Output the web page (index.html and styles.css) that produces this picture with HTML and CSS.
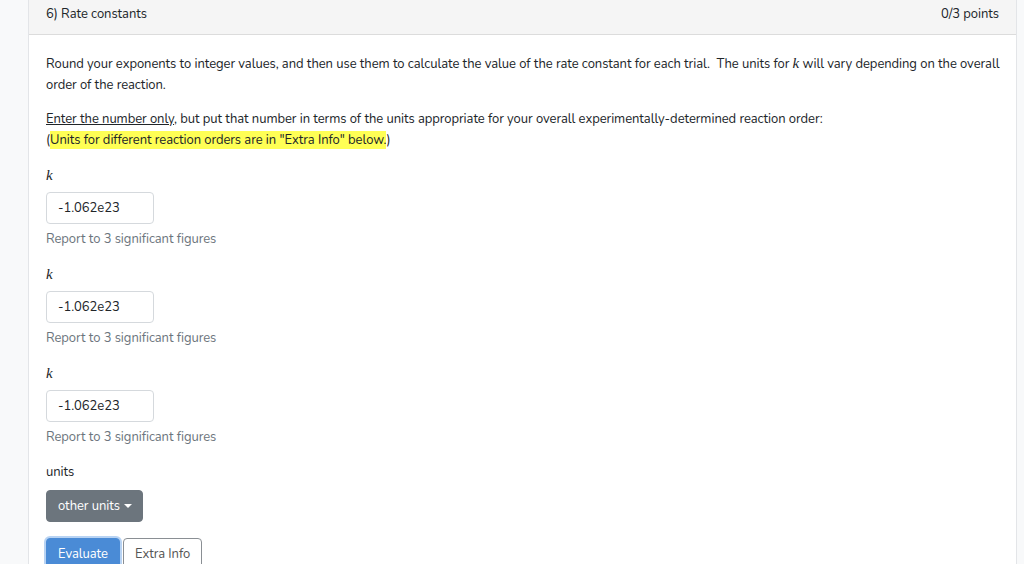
FILE: index.html
```html
<!DOCTYPE html>
<html lang="en">
<head>
  <meta charset="UTF-8" />
  <title>Rate constants</title>
  <link rel="stylesheet" href="styles.css">
</head>
<body>

<div class="card">
  <div class="card-header">
    <span>6) Rate constants</span>
    <span>0/3 points</span>
  </div>
  <div class="card-body">
    <p>Round your exponents to integer values, and then use them to calculate the value of the rate constant for each trial.&nbsp; The units for <span class="math">k</span> will vary depending on the overall order of the reaction.</p>
    <p><u>Enter the number only</u>, but put that number in terms of the units appropriate for your overall experimentally-determined reaction order:<br>(<mark>Units for different reaction orders are in "Extra Info" below.</mark>)</p>

    <div class="field">
      <div class="math label">k</div>
      <input class="answer" type="text" value="-1.062e23">
      <div class="help">Report to 3 significant figures</div>
    </div>
    <div class="field">
      <div class="math label">k</div>
      <input class="answer" type="text" value="-1.062e23">
      <div class="help">Report to 3 significant figures</div>
    </div>
    <div class="field">
      <div class="math label">k</div>
      <input class="answer" type="text" value="-1.062e23">
      <div class="help">Report to 3 significant figures</div>
    </div>

    <div class="field">
      <div class="label units">units</div>
      <button class="btn btn-gray">other units <span class="caret"></span></button>
    </div>

    <div class="actions">
      <button class="btn btn-blue">Evaluate</button>
      <button class="btn btn-outline">Extra Info</button>
    </div>
  </div>
</div>

</body>
</html>
```

FILE: styles.css
```css
* { box-sizing: border-box; }
body { margin: 0; background: #f8f9fa; color: #212529; font-family: 'Nunito', 'Lato', 'Noto Sans', sans-serif; font-size: 13px; line-height: 21px; letter-spacing: -0.06px; }
.card { margin-left: 28px; width: 989px; background: #fff; border-left: 1px solid #e3e5e8; border-right: 1px solid #e3e5e8; min-height: 564px; }
.card-header { height: 35px; background: #f5f5f5; border-bottom: 1px solid #dcdcdc; display: flex; justify-content: space-between; align-items: center; padding: 0 17px 5px 17px; }
.card-body { padding: 18px 16px 18px 17px; }
p { margin: 0 0 13px 0; }
mark { background: #ffff55; color: #212529; padding: 0; }
.math { font-family: 'Liberation Serif', 'DejaVu Serif', serif; font-style: italic; font-size: 15px; letter-spacing: 0; }
.field { margin-top: 14px; }
.label { margin-bottom: 6px; }
.label.units { margin-bottom: 7px; }
.answer { display: block; width: 108px; height: 32px; padding: 0 11px; border: 1px solid #d5d9dd; border-radius: 4px; font: inherit; letter-spacing: inherit; color: #212529; }
.help { margin-top: 5px; color: #6c757d; }
.btn { font: inherit; letter-spacing: inherit; height: 32px; border-radius: 4px; padding: 0 11px; cursor: pointer; }
.btn-gray { background: #6c757d; color: #fff; border: 1px solid #6c757d; padding-right: 10px; }
.caret { display: inline-block; vertical-align: 2px; margin-left: 1px; border-left: 4px solid transparent; border-right: 4px solid transparent; border-top: 4px solid #fff; }
.actions { margin-top: 16px; display: flex; gap: 3px; margin-left: -1px; }
.btn-blue { background: #4a8bd6; color: #fff; border: 1px solid #4a8bd6; box-shadow: 0 0 0 2px #b8d3f3; margin-left: 1px; }
.btn-outline { background: #fff; color: #555; border: 1px solid #8a8f94; }
```
